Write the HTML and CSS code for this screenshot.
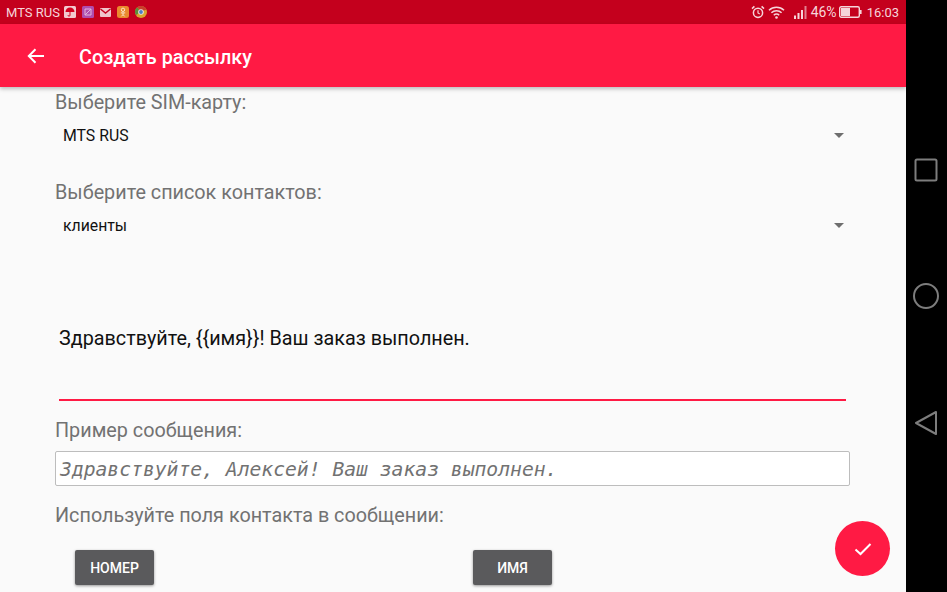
FILE: index.html
```html
<!DOCTYPE html>
<html lang="ru">
<head>
  <meta charset="UTF-8">
  <meta name="viewport" content="width=device-width, initial-scale=1.0">
  <title>Создать рассылку</title>
  <link rel="stylesheet" href="styles.css">
</head>
<body>
  <div class="screen">
    <div class="status-bar">
      <div class="status-left">
        <span class="carrier">MTS RUS</span>
        <svg class="notif" width="12" height="12" viewBox="0 0 12 12"><rect width="12" height="12" rx="1.500" fill="#f3c9cf"/><path d="M1.500 6a4.500 4.500 0 0 1 9 0z" fill="#d4001f"/><path d="M6 6v3.200a1 1 0 0 1-2 0" stroke="#d4001f" stroke-width="1" fill="none"/></svg>
        <svg class="notif" width="12" height="12" viewBox="0 0 12 12"><rect width="12" height="12" rx="1.500" fill="#b04cae"/><path d="M3 9l6-6M3 3h6v6H3z" stroke="#dfb3dc" stroke-width="1" fill="none"/></svg>
        <svg class="notif" width="11" height="9" viewBox="0 0 11 9"><rect width="11" height="9" rx="1" fill="#f0c4cb"/><path d="M0.500 1l5 4 5-4" stroke="#c4001d" stroke-width="1.400" fill="none"/></svg>
        <svg class="notif" width="12" height="12" viewBox="0 0 12 12"><rect width="12" height="12" rx="2.500" fill="#ea8a2e"/><circle cx="6" cy="3.800" r="1.700" fill="none" stroke="#fbe3c8" stroke-width="1"/><path d="M3.800 6.900h4.400M6 6.900v1.700M4.300 10.400L6 8.600l1.700 1.800" stroke="#fbe3c8" stroke-width="1" fill="none"/></svg>
        <svg class="notif" width="12" height="12" viewBox="0 0 12 12"><circle cx="6" cy="6" r="6" fill="#d9a62e"/><path d="M6 6L1 9.100A6 6 0 0 1 2.200 1.300z" fill="#5b8f3c"/><path d="M6 6L2.200 1.300A6 6 0 0 1 11.500 3.500z" fill="#c8402c"/><circle cx="6" cy="6" r="2.800" fill="#f3e3e3"/><circle cx="6" cy="6" r="1.900" fill="#4a7fc4"/></svg>
      </div>
      <div class="status-right">
        <svg width="14" height="14" viewBox="0 0 14 14"><circle cx="7" cy="7.800" r="4.600" fill="none" stroke="#f6d5da" stroke-width="1.500"/><path d="M7 5.300v2.700l1.800 1" stroke="#f6d5da" stroke-width="1.200" fill="none"/><path d="M1 3.600L3.400 1.400M13 3.600L10.600 1.400" stroke="#f6d5da" stroke-width="1.500"/></svg>
        <svg class="wifi" width="17" height="13" viewBox="0 0 17 13"><g fill="none" stroke="#f6d5da" stroke-width="1.500"><path d="M1 4.300a10.600 10.600 0 0 1 15 0"/><path d="M3.400 6.800a7.200 7.200 0 0 1 10.200 0"/><path d="M5.800 9.200a3.800 3.800 0 0 1 5.400 0"/></g><circle cx="8.500" cy="11.500" r="1.300" fill="#f6d5da"/></svg>
        <svg class="signal" width="14" height="13" viewBox="0 0 14 13"><rect x="0" y="9.500" width="2" height="3.500" fill="#f6d5da"/><rect x="3.500" y="7" width="2" height="6" fill="#f6d5da"/><rect x="7" y="4" width="2" height="9" fill="#f6d5da"/><rect x="10.500" y="0" width="2" height="13" fill="#e2808f"/></svg>
        <span class="battery-pct">46%</span>
        <svg class="battery" width="23" height="12" viewBox="0 0 23 12"><rect x="0.700" y="0.700" width="19.600" height="10.600" rx="1.500" fill="none" stroke="#f6d5da" stroke-width="1.400"/><rect x="2" y="2" width="9" height="8" fill="#f6d5da"/><rect x="21" y="4" width="1.600" height="4" fill="#f6d5da"/></svg>
        <span class="clock">16:03</span>
      </div>
    </div>

    <header class="toolbar">
      <svg class="back" width="18" height="16" viewBox="0 0 18 16"><path d="M17 8H2M8.500 1.300L1.800 8l6.700 6.700" fill="none" stroke="#fff" stroke-width="2"/></svg>
      <h1>Создать рассылку</h1>
    </header>

    <main class="content">
      <label class="field-label first">Выберите SIM-карту:</label>
      <div class="spinner">
        <span>MTS RUS</span>
        <i class="caret"></i>
      </div>

      <label class="field-label second">Выберите список контактов:</label>
      <div class="spinner">
        <span>клиенты</span>
        <i class="caret"></i>
      </div>

      <div class="message">Здравствуйте, {{имя}}! Ваш заказ выполнен.</div>

      <label class="field-label">Пример сообщения:</label>
      <div class="preview">Здравствуйте, Алексей! Ваш заказ выполнен.</div>

      <label class="field-label third">Используйте поля контакта в сообщении:</label>
      <div class="tags">
        <div class="tag-cell"><button class="tag">НОМЕР</button></div>
        <div class="tag-cell"><button class="tag">ИМЯ</button></div>
      </div>
    </main>

    <button class="fab" aria-label="Готово">
      <svg width="18" height="14" viewBox="0 0 18 14"><path d="M1.500 7.500l5 4.500L16.500 2" fill="none" stroke="#fff" stroke-width="2"/></svg>
    </button>
  </div>

  <nav class="nav-bar">
    <svg width="24" height="24" viewBox="0 0 24 24"><rect x="1.500" y="1.500" width="21" height="21" rx="1.500" fill="none" stroke="#7d7d7d" stroke-width="2"/></svg>
    <svg width="26" height="26" viewBox="0 0 26 26"><circle cx="13" cy="13" r="12" fill="none" stroke="#7d7d7d" stroke-width="2"/></svg>
    <svg width="24" height="26" viewBox="0 0 24 26"><path d="M22 2L2 13l20 11z" fill="none" stroke="#7d7d7d" stroke-width="2" stroke-linejoin="round"/></svg>
  </nav>
</body>
</html>
```

FILE: styles.css
```css
html, body {
  margin: 0;
  height: 100%;
  overflow: hidden;
}
body {
  display: flex;
  width: 947px;
  height: 592px;
  font-family: Roboto, "Noto Sans", sans-serif;
  background-color: #000;
}
.screen {
  position: relative;
  width: 906px;
  height: 592px;
  overflow: hidden;
  background-color: #fafafa;
  flex-shrink: 0;
}
.status-bar {
  height: 24px;
  background-color: #c4001d;
  color: #f6d5da;
  display: flex;
  justify-content: space-between;
  align-items: center;
  padding: 0 7px 0 6px;
  font-size: 13px;
}
.status-left, .status-right {
  display: flex;
  align-items: center;
}
.carrier {
  margin-right: 4px;
}
.notif {
  margin-right: 6px;
}
.wifi {
  margin-left: 3px;
}
.signal {
  margin-left: 9px;
}
.battery-pct {
  margin-left: 3px;
  font-size: 14px;
}
.battery {
  margin-left: 2px;
}
.clock {
  margin-left: 5px;
}
.toolbar {
  height: 63px;
  background-color: #ff1a44;
  display: flex;
  align-items: center;
  padding-left: 27px;
  box-shadow: 0 2px 4px rgba(0, 0, 0, 0.25);
  position: relative;
}
.toolbar h1 {
  margin: 4px 0 0 34px;
  font-size: 19.8px;
  font-weight: 500;
  color: #fff;
}
.content {
  padding: 0 56px 0 55px;
}
.field-label {
  display: block;
  font-size: 19.8px;
  line-height: 24px;
  color: #727272;
}
.field-label.first {
  padding-top: 4px;
}
.field-label.second {
  margin-top: 26px;
}
.field-label.third {
  margin-top: 18px;
}
.spinner {
  height: 40px;
  display: flex;
  justify-content: space-between;
  align-items: center;
  padding: 0 6px 0 8px;
  font-size: 15.8px;
  color: #111;
}
.caret {
  width: 0;
  height: 0;
  border-left: 5px solid transparent;
  border-right: 5px solid transparent;
  border-top: 5px solid #6e6e6e;
}
.message {
  margin: 80px 4px 18px 4px;
  height: 72px;
  padding-top: 2px;
  font-size: 19.8px;
  line-height: 24px;
  color: #111;
  border-bottom: 2px solid #ff1a44;
}
.preview {
  height: 33px;
  margin-top: 8px;
  border: 1px solid #bdbdbd;
  border-radius: 2px;
  background-color: #fff;
  padding-left: 4px;
  font-family: "DejaVu Sans Mono", monospace;
  font-style: italic;
  font-size: 19.68px;
  line-height: 35px;
  color: #727272;
  white-space: nowrap;
  width: 789px;
}
.tags {
  display: grid;
  grid-template-columns: 398px 1fr;
  margin-top: 22px;
  padding-left: 20px;
}
.tag {
  display: block;
  width: 79px;
  height: 35px;
  border: none;
  border-radius: 2px;
  background-color: #5a5a5c;
  color: #fff;
  font-family: Roboto, sans-serif;
  font-size: 14px;
  font-weight: 500;
  box-shadow: 0 1px 3px rgba(0, 0, 0, 0.4);
}
.fab {
  position: absolute;
  left: 835px;
  top: 521px;
  width: 55px;
  height: 55px;
  border: none;
  border-radius: 50%;
  background-color: #ff1a44;
  display: flex;
  align-items: center;
  justify-content: center;
  padding: 0;
}
.nav-bar {
  width: 41px;
  height: 592px;
  display: flex;
  flex-direction: column;
  align-items: center;
  padding: 158px 1px 0 0;
  box-sizing: border-box;
}
.nav-bar svg:nth-child(2) {
  margin-top: 101px;
}
.nav-bar svg:nth-child(3) {
  margin-top: 101px;
}
```
